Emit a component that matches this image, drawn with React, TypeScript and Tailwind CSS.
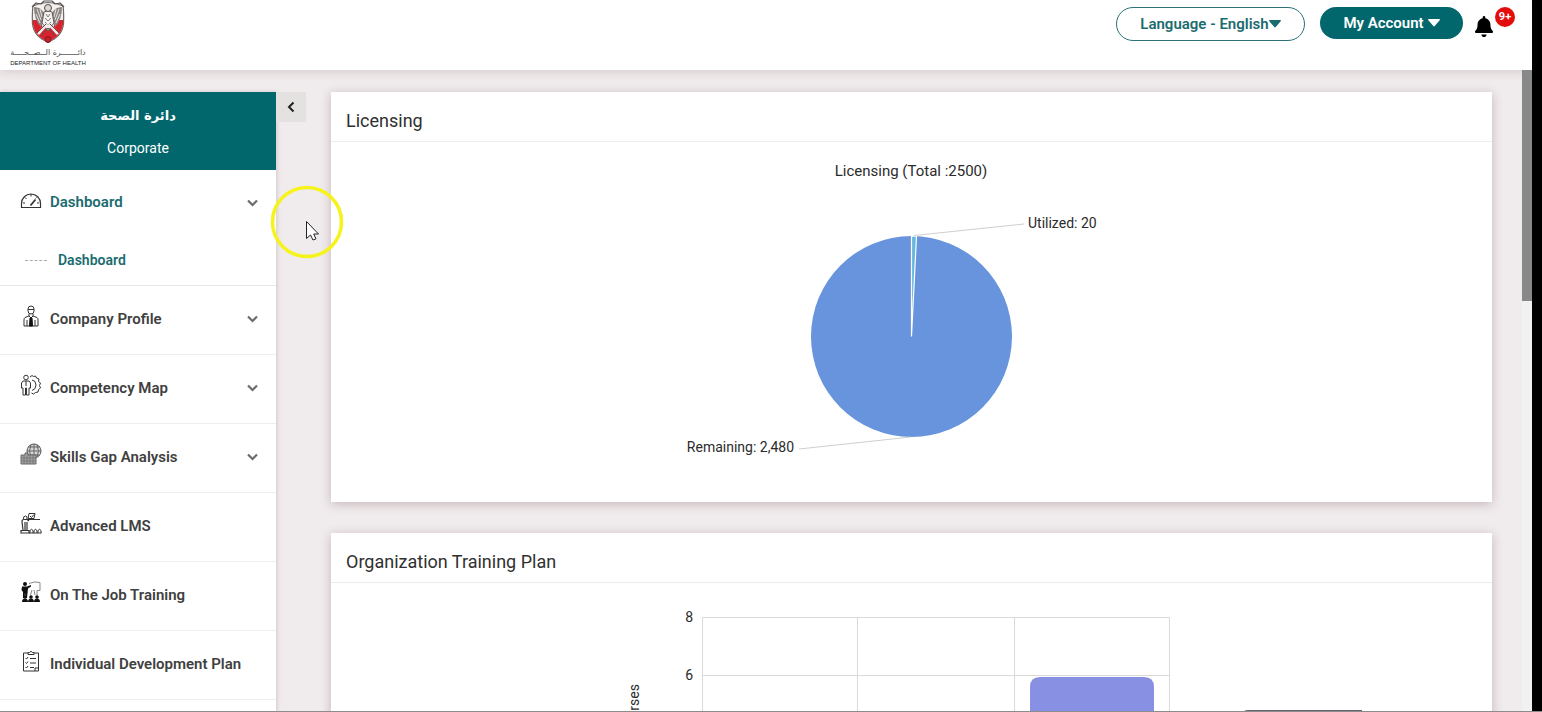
import type { ReactNode } from "react";

const ARABIC_FONT = "font-['DejaVu_Sans','Noto_Sans',sans-serif]";

function Logo() {
  return (
    <svg width="76" height="68" viewBox="0 0 76 68" role="img" aria-label="Department of Health">
      <g fill="none" strokeLinejoin="round">
        <path d="M23 6 Q38 -1 53 6 Q54 12 53.500 24 Q52 37 38 42 Q24 37 22.500 24 Q22 12 23 6 Z" fill="#f4f0ee" stroke="#6d6765" strokeWidth="1.200" />
        <path d="M22.800 20 H30 L33 28 H43 L46 20 H53.200 Q53.500 36 38 41.500 Q22.500 36 22.800 20 Z" fill="#d8232f" />
        <path d="M24 7 Q31 7 34 13 L31 27 Q24 20 24 7 Z M52 7 Q45 7 42 13 L45 27 Q52 20 52 7 Z" fill="#8b8482" />
        <path d="M27 9 L31 20 M30 9 L32 17 M49 9 L45 20 M46 9 L44 17 M26 14 L30 23 M50 14 L46 23" stroke="#e9e4e2" />
        <path d="M34 12 Q38 9 42 12 L44 23 L38 31 L32 23 Z" fill="#f4f0ee" stroke="#5d5755" />
        <circle cx="38" cy="8" r="3.500" fill="#dcd7d5" stroke="#4f4a48" />
        <path d="M36 14 L38 17 L40 14 M35 18 L38 21 L41 18 M35 22 L38 25 L41 22" stroke="#857e7c" />
        <path d="M28 34 L37 24 M48 34 L39 24" stroke="#f0ebe9" strokeWidth="3" />
        <path d="M27 33 L36 24 M49 33 L40 24 M31 36 L38 28 L45 36" stroke="#575150" />
        <path d="M22 7 L26 3 L31 4 L34 1 L42 1 L45 4 L50 3 L54 7" stroke="#57514f" strokeWidth="1.200" />
        <circle cx="38" cy="39.500" r="3" fill="#c81d28" stroke="#861a22" />
      </g>
      <text x="38" y="55" textAnchor="middle" fontSize="8" fill="#4b4b4b" className={ARABIC_FONT}>
        دائـــــــرة الــصــحــــة
      </text>
      <text x="38" y="65" textAnchor="middle" fontSize="6" fill="#222" className="font-['Liberation_Sans',sans-serif]">
        DEPARTMENT OF HEALTH
      </text>
    </svg>
  );
}

function Caret() {
  return (
    <svg width="12" height="8" viewBox="0 0 12 8" aria-hidden="true">
      <path d="M.8 0h10.400c.8 0 1 .7.5 1.200L6.700 7c-.4.5-1 .5-1.400 0L.3 1.200C-.2.7 0 0 .8 0z" fill="currentColor" />
    </svg>
  );
}

function Bell() {
  return (
    <svg width="18" height="21" viewBox="0 0 448 512" aria-hidden="true" preserveAspectRatio="none">
      <path
        fill="currentColor"
        d="M224 512c35 0 64-29 64-64H160c0 35 29 64 64 64zm215-150c-19-21-55-52-55-154 0-78-54-140-128-155V32c0-18-14-32-32-32s-32 14-32 32v21C118 68 64 130 64 208c0 102-36 133-55 154-6 6-9 14-9 22 0 16 13 32 32 32h384c19 0 32-16 32-32 0-8-3-16-9-22z"
      />
    </svg>
  );
}

function Chevron() {
  return (
    <svg width="11" height="8" viewBox="0 0 11 8" fill="none" aria-hidden="true">
      <path d="M1 1.500 L5.500 6 L10 1.500" stroke="#6b6b6b" strokeWidth="2.200" />
    </svg>
  );
}

function Glyph({ children }: { children: ReactNode }) {
  return (
    <svg width="22" height="22" viewBox="0 0 22 22" fill="none" stroke="#333" strokeWidth="1" aria-hidden="true">
      {children}
    </svg>
  );
}

const gauge = (
  <Glyph>
    <path d="M1.500 17.500 V13.500 A9.500 9.500 0 0 1 20.500 13.500 V17.500 Z" strokeWidth="1.200" />
    <path d="M10.500 15.500 L15.500 9.500" strokeWidth="1.800" />
    <path d="M11 4 V6.500 M5 7.500 L6.500 9 M3 13 H5 M17 13 H19 M16.500 7.500 L15.500 8.500" />
  </Glyph>
);

const person = (
  <Glyph>
    <path d="M8 4 Q8 1 11 1 Q14 1 14 4 V6 Q14 9 11 9 Q8 9 8 6 Z M8 4.500 H14" />
    <path d="M9 9 V11 L5 12.500 Q4 13 4 15 V21 H18 V15 Q18 13 17 12.500 L13 11 V9 M7 15 V21 M15 15 V21" />
    <path d="M9 11 L11 13 L13 11" />
    <path d="M10 13 H12 L12.500 21 H9.500 Z" fill="#111" stroke="#111" />
  </Glyph>
);

const competency = (
  <Glyph>
    <circle cx="6" cy="3.500" r="2.300" />
    <path d="M3 7 H9 L10.500 9 V14 H9 V21 H6.500 V14 H5.500 V21 H3 V14 H1.500 V9 Z M6 7 V12" />
    <path d="M10 3 L12 1.500 L13.500 2.500 L15.500 2 L16.500 4 L19 5 L18.500 7.500 L20.500 9 L19.500 11.500 L20.500 14 L18.500 15.500 L18 18 L15.500 18.500 L13.500 20 L11.500 19" />
    <path d="M12 6 Q16 6.500 16 11 Q16 15.500 12 16.500" />
  </Glyph>
);

const skills = (
  <Glyph>
    <circle cx="14" cy="8" r="7" stroke="#555" fill="#d6d6d6" />
    <path d="M14 1 V15 M7 8 H21 M8.500 4 H19.500 M8.500 12 H19.500 M11 1.800 Q8 8 11 14 M17 1.800 Q20 8 17 14" stroke="#666" />
    <path d="M1 12 H5 V10 H8 V12 H16 V21 H1 Z" fill="#a5a5a5" stroke="#666" />
    <path d="M1 15 H16 M1 18 H16 M4 12 V21 M7 12 V21 M10 12 V21 M13 12 V21" stroke="#777" />
  </Glyph>
);

const lms = (
  <Glyph>
    <path d="M9 1.500 H15 L14 6.500 H8 Z M10 4 L11.500 5.500 L14 2.500" />
    <path d="M3.500 7 Q3 4 5.500 4 Q7.500 4 7 7" />
    <path d="M7 7.500 H20 M2 9.500 Q2 7.500 4 7.500 H7 L9 9 M2 9.500 L3 18 M5 10 V18 M7 10 V18 M1 18.500 H9 V21 H1 Z" strokeWidth="1.200" />
    <path d="M10 21 V18.500 Q11.500 16 13 18.500 V21 M14 21 V18.500 Q15.500 16 17 18.500 V21 M18 21 V18.500 Q19.500 16 21 18.500 V21 M9 21 H21.500" />
  </Glyph>
);

const training = (
  <Glyph>
    <circle cx="5" cy="3" r="2" fill="#111" stroke="none" />
    <path d="M2 5.500 H7 L11 4 V5.500 L8 7.500 L7 17 H5.500 L5 12 L4.500 17 H3 V11 L1.500 9 Z" fill="#111" stroke="none" />
    <path d="M9 2.500 Q14 0 20 1.500 V9.500 H17 M12 9 L10.500 14 M14 9 L15 14 M17 9.500 V14" stroke="#888" />
    <g fill="#111" stroke="none">
      <circle cx="5" cy="16" r="1.800" />
      <circle cx="11" cy="16" r="1.800" />
      <circle cx="17" cy="16" r="1.800" />
      <path d="M2 21 Q2 17.500 5 17.500 Q8 17.500 8 21 Z M8 21 Q8 17.500 11 17.500 Q14 17.500 14 21 Z M14 21 Q14 17.500 17 17.500 Q20 17.500 20 21 Z" />
    </g>
  </Glyph>
);

const plan = (
  <Glyph>
    <path d="M8 3 H3.500 V21 H18.500 V3 H14 M8 4.500 V2.500 H9.500 Q11 0 12.500 2.500 H14 V4.500 Z" />
    <path d="M5.500 8 L6.500 9 L8 7 M10 8.500 H16 M5.500 12.500 L6.500 13.500 L8 11.500 M10 13 H16 M5.500 17 L6.500 18 L8 16 M10 17.500 H14" />
    <path d="M15 21 V18 H18" />
  </Glyph>
);

const MENU = [
  { label: "Company Profile", icon: person, expandable: true },
  { label: "Competency Map", icon: competency, expandable: true },
  { label: "Skills Gap Analysis", icon: skills, expandable: true },
  { label: "Advanced LMS", icon: lms, expandable: false },
  { label: "On The Job Training", icon: training, expandable: false },
  { label: "Individual Development Plan", icon: plan, expandable: false },
];

function Header() {
  return (
    <header className="relative z-10 flex h-[70px] shrink-0 items-start justify-between bg-white pl-[10px] pr-[17px] shadow-[0_1px_10px_rgba(90,40,50,0.18)]">
      <a href="#home">
        <Logo />
      </a>
      <div className="flex items-start pt-[7px]">
        <button className="flex h-[34px] w-[189px] items-center justify-center rounded-full border border-[#2c7275] text-[15px] font-semibold text-[#1b6c6f]">
          Language - English
          <Caret />
        </button>
        <button className="ml-[15px] flex h-8 w-[143px] items-center justify-center gap-1 rounded-full bg-[#02676c] text-[15px] font-semibold text-white">
          My Account
          <Caret />
        </button>
        <button className="relative ml-3 mt-[9px] pr-[22px] text-black" aria-label="Notifications">
          <Bell />
          <span className="absolute -top-[9px] right-0 flex size-5 items-center justify-center rounded-full bg-[#e30d0d] text-[11px] font-bold text-white">
            9+
          </span>
        </button>
      </div>
    </header>
  );
}

function Sidebar() {
  return (
    <aside className="w-[276px] shrink-0 self-stretch bg-white shadow-[1px_0_4px_rgba(90,60,70,0.2)]">
      <div className="flex h-[78px] flex-col items-center justify-center gap-2 bg-[#02676c] pt-[2px] text-white">
        <div dir="rtl" className={`text-[13px] leading-6 font-bold ${ARABIC_FONT}`}>
          دائرة الصحة
        </div>
        <div className="text-sm leading-6">Corporate</div>
      </div>
      <nav>
        <div className="border-b border-[#e6e6e6]">
          <button className="flex h-[65px] w-full items-center pl-5 pr-[18px] text-left text-[15px] font-semibold text-[#1b6c6f]">
            <span className="mb-1">{gauge}</span>
            <span className="ml-2 flex-1">Dashboard</span>
            <Chevron />
          </button>
          <a href="#dashboard" className="flex h-[50px] items-center pl-[25px] text-sm font-semibold text-[#1b6c6f]">
            <span className="mr-[11px] w-[22px] border-t border-dashed border-[#aaa]" />
            Dashboard
          </a>
        </div>
        {MENU.map((item) => (
          <button
            key={item.label}
            className="flex h-[69px] w-full items-center border-b border-[#eeeeee] pb-[2px] pl-5 pr-[18px] text-left text-[15px] font-semibold text-[#404040]"
          >
            <span className="mb-[6px]">{item.icon}</span>
            <span className="ml-2 flex-1">{item.label}</span>
            {item.expandable && <Chevron />}
          </button>
        ))}
      </nav>
    </aside>
  );
}

function Card({ title, children }: { title: string; children: ReactNode }) {
  return (
    <section className="bg-white shadow-[0_2px_10px_rgba(90,50,60,0.28)]">
      <h2 className="flex h-[50px] items-center border-b border-[#ececec] px-[15px] pt-2 text-lg text-[#303030]">{title}</h2>
      {children}
    </section>
  );
}

function LicensingChart() {
  return (
    <svg className="mx-auto block" width="501" height="360" viewBox="0 0 501 360" fontSize="14" fill="#2b2b2b">
      <text x="250" y="34" textAnchor="middle" fontSize="15">
        Licensing (Total :2500)
      </text>
      <circle cx="250.500" cy="194.500" r="100.500" fill="#6794dc" />
      <path d="M250.500 194.500 L250.500 94 A100.500 100.500 0 0 1 255.500 94.200 Z" fill="#67b7dc" stroke="#fff" strokeWidth="1.200" />
      <path d="M253 93.500 L363 82 M250 295 L138 307" fill="none" stroke="#cfcfcf" />
      <text x="367" y="86">Utilized: 20</text>
      <text x="133" y="310" textAnchor="end">
        Remaining: 2,480
      </text>
    </svg>
  );
}

function TrainingChart() {
  return (
    <svg className="mx-auto block" width="901" height="360" viewBox="-50 0 901 360" fontSize="14" fill="#2b2b2b">
      <path
        d="M191.500 34.500 H658.500 M191.500 92.500 H658.500 M191.500 150.500 H658.500 M191.500 34.500 V300 M346.500 34.500 V300 M503.500 34.500 V300 M658.500 34.500 V300"
        fill="none"
        stroke="#dadada"
      />
      <text x="182" y="39" textAnchor="end">8</text>
      <text x="182" y="97" textAnchor="end">6</text>
      <text x="128" y="101" transform="rotate(-90 128 101)" textAnchor="end">
        Number of Courses
      </text>
      <path d="M519 300 V104 Q519 94 529 94 H633 Q643 94 643 104 V300 Z" fill="#8890e3" />
      <path d="M731 300 V133 Q731 127 737 127 H850 Q856 127 856 133 V300 Z" fill="#62636f" />
    </svg>
  );
}

function PointerHighlight() {
  return (
    <svg className="pointer-events-none absolute left-[270px] top-[185px] z-20" width="74" height="74" viewBox="0 0 74 74" fill="none" aria-hidden="true">
      <circle cx="37" cy="37" r="34.500" stroke="#f6f31c" strokeWidth="3.500" />
      <path d="M36.500 36.500 V53.500 L40.500 50 L43 55 L46 53.800 L43.700 49 H48.500 Z" fill="#fff" stroke="#222" />
    </svg>
  );
}

export default function App() {
  return (
    <div className="relative flex h-screen overflow-hidden border-b border-[#8c8c8c] bg-black font-[Roboto,sans-serif]">
      <div className="flex min-w-0 flex-1 flex-col bg-[#f0ebec]">
        <Header />
        <div className="flex min-h-0 flex-1 overflow-hidden">
          <div className="flex min-w-0 flex-1 items-start pt-[22px]">
            <Sidebar />
            <button className="flex size-[30px] shrink-0 items-center justify-center bg-[#e4e1e1]" aria-label="Collapse sidebar">
              <svg width="8" height="12" viewBox="0 0 8 12" fill="none" aria-hidden="true">
                <path d="M6.500 1.500 L2 6 L6.500 10.500" stroke="#222" strokeWidth="2" />
              </svg>
            </button>
            <main className="ml-[25px] mr-[30px] flex min-w-0 flex-1 flex-col gap-[31px]">
              <Card title="Licensing">
                <LicensingChart />
              </Card>
              <Card title="Organization Training Plan">
                <TrainingChart />
              </Card>
            </main>
          </div>
          <div className="relative z-10 w-[10px] shrink-0 bg-[#f1f1f1]">
            <div className="h-[36%] bg-[#888888]" />
          </div>
        </div>
      </div>
      <div className="w-[10px] shrink-0 bg-black" />
      <PointerHighlight />
    </div>
  );
}
